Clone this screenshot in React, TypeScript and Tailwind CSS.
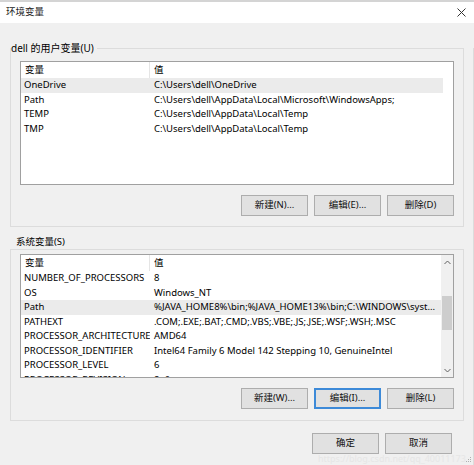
import React from 'react';

const FONT = { fontFamily: '"Noto Sans", "Noto Sans CJK SC", sans-serif' };

type Row = { name: string; value: string; selected?: boolean };

const userVars: Row[] = [
  { name: 'OneDrive', value: 'C:\\Users\\dell\\OneDrive', selected: true },
  { name: 'Path', value: 'C:\\Users\\dell\\AppData\\Local\\Microsoft\\WindowsApps;' },
  { name: 'TEMP', value: 'C:\\Users\\dell\\AppData\\Local\\Temp' },
  { name: 'TMP', value: 'C:\\Users\\dell\\AppData\\Local\\Temp' },
];

const sysVars: Row[] = [
  { name: 'NUMBER_OF_PROCESSORS', value: '8' },
  { name: 'OS', value: 'Windows_NT' },
  { name: 'Path', value: '%JAVA_HOME8%\\bin;%JAVA_HOME13%\\bin;C:\\WINDOWS\\syst...', selected: true },
  { name: 'PATHEXT', value: '.COM;.EXE;.BAT;.CMD;.VBS;.VBE;.JS;.JSE;.WSF;.WSH;.MSC' },
  { name: 'PROCESSOR_ARCHITECTURE', value: 'AMD64' },
  { name: 'PROCESSOR_IDENTIFIER', value: 'Intel64 Family 6 Model 142 Stepping 10, GenuineIntel' },
  { name: 'PROCESSOR_LEVEL', value: '6' },
  { name: 'PROCESSOR_REVISION', value: '8e0a' },
];

const Chevron = ({ up }: { up?: boolean }) => (
  <svg width="7" height="5" viewBox="0 0 7 5">
    <path d={up ? 'M0.5 4 L3.5 1 L6.5 4' : 'M0.5 1 L3.5 4 L6.5 1'} fill="none" stroke="#606060" strokeWidth="1" />
  </svg>
);

const VarList = ({ rows, scroll }: { rows: Row[]; scroll?: boolean }) => (
  <div className="h-[124px] border border-[#a0a0a0] bg-white flex overflow-hidden">
    <div className="w-[422px] flex flex-col">
      <div className="h-[16px] shrink-0 flex items-center">
        <div className="w-[129px] h-full pl-[4px] flex items-center border-r border-[#e5e5e5]">变量</div>
        <div className="pl-[4px]">值</div>
      </div>
      {rows.map((r) => (
        <div
          key={r.name}
          className={`h-[14.5px] shrink-0 flex items-center whitespace-nowrap ${r.selected ? 'bg-[#ebebeb]' : ''}`}
        >
          <div className="w-[129px] shrink-0 pl-[3px] overflow-hidden">{r.name}</div>
          <div className="pl-[4px]">{r.value}</div>
        </div>
      ))}
    </div>
    {scroll && (
      <div className="w-[12px] ml-auto bg-[#f0f0f0] flex flex-col">
        <div className="h-[14px] flex items-center justify-center"><Chevron up /></div>
        <div className="flex-1">
          <div className="mt-[27px] h-[34px] mx-[1px] bg-[#cdcdcd]" />
        </div>
        <div className="h-[14px] flex items-center justify-center"><Chevron /></div>
      </div>
    )}
  </div>
);

const Btn = ({ label, focused }: { label: string; focused?: boolean }) => (
  <button
    className={`w-[67px] h-[21px] bg-[#e1e1e1] flex items-center justify-center text-[9.5px] text-[#111] ${
      focused ? 'border-2 border-[#3d8ad8]' : 'border border-[#adadad]'
    }`}
  >
    {label}
  </button>
);

export default function App() {
  return (
    <div style={FONT} className="w-[474px] h-[465px] bg-[#f0f0f0] border-t-2 border-[#d4d4d4] text-[9.5px] text-black relative overflow-hidden">
      {/* title bar */}
      <div className="h-[21px] bg-white flex items-center justify-between pl-[6px] pr-[8px]">
        <span className="text-[9.5px] text-[#222]">环境变量</span>
        <svg width="9" height="9" viewBox="0 0 9 9">
          <path d="M0.5 0.5 L8.5 8.5 M8.5 0.5 L0.5 8.5" stroke="#333" strokeWidth="1" />
        </svg>
      </div>

      <div className="pl-[10px] pr-[9px] border-r border-[#dcdcdc] h-[442px]">
        {/* user variables */}
        <div className="relative mt-[25px] border border-[#dcdcdc] pt-[12px] px-[9px] pb-[10px]">
          <span className="absolute left-[0px] top-[-8px] bg-[#f0f0f0] pr-[3px] leading-[14px] text-[10px]">dell 的用户变量(U)</span>
          <VarList rows={userVars} />
          <div className="mt-[10px] flex justify-end gap-[6px]">
            <Btn label="新建(N)..." />
            <Btn label="编辑(E)..." />
            <Btn label="删除(D)" />
          </div>
        </div>

        {/* system variables */}
        <div className="h-[14px] mt-[8px] pl-[6px] leading-[14px]">系统变量(S)</div>
        <div className="border border-[#dcdcdc] pt-[4px] px-[9px] pb-[11px]">
          <VarList rows={sysVars} scroll />
          <div className="mt-[10px] flex justify-end gap-[6px]">
            <Btn label="新建(W)..." />
            <Btn label="编辑(I)..." focused />
            <Btn label="删除(L)" />
          </div>
        </div>

        <div className="mt-[12px] flex justify-end gap-[6px] pr-[12px]">
          <Btn label="确定" />
          <Btn label="取消" />
        </div>
      </div>

      <span className="absolute left-[318px] top-[450px] text-[9px] text-[#e6e6e6] whitespace-nowrap">
        https://blog.csdn.net/qq_40011173
      </span>
      <svg className="absolute right-[2px] bottom-[2px]" width="6" height="6" viewBox="0 0 6 6">
        <rect x="4" y="0" width="1" height="1" fill="#b0b0b0" />
        <rect x="2" y="2" width="1" height="1" fill="#b0b0b0" />
        <rect x="4" y="2" width="1" height="1" fill="#b0b0b0" />
        <rect x="0" y="4" width="1" height="1" fill="#b0b0b0" />
        <rect x="2" y="4" width="1" height="1" fill="#b0b0b0" />
        <rect x="4" y="4" width="1" height="1" fill="#b0b0b0" />
      </svg>
    </div>
  );
}
